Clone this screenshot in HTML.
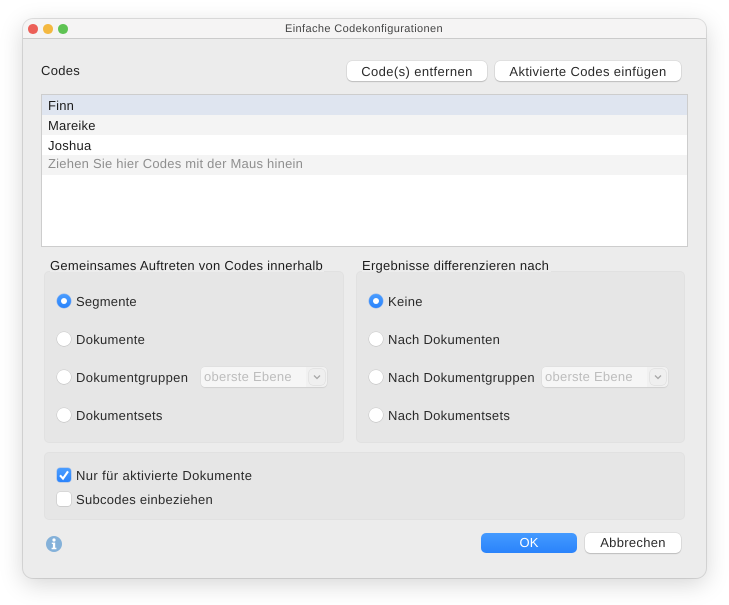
<!DOCTYPE html>
<html><head><meta charset="utf-8">
<style>
html,body{margin:0;padding:0;background:#fff;width:729px;height:605px;overflow:hidden}
body{position:relative;font-family:"Liberation Sans",sans-serif;font-size:13px;color:#2a2a2a;text-rendering:geometricPrecision;filter:blur(.3px)}
div,span{position:absolute;box-sizing:border-box}
.t{white-space:nowrap;line-height:16px;height:16px}
#win{left:23px;top:19px;width:683px;height:559px;background:#ececec;border-radius:10px;box-shadow:0 0 0 1px rgba(0,0,0,.11),0 6px 24px rgba(0,0,0,.17)}
#bar{left:0;top:0;width:683px;height:20px;background:#f5f4f4;border-bottom:1px solid #cbcbcb;border-radius:10px 10px 0 0}
.dot{width:9.5px;height:9.5px;border-radius:50%;top:5px}
.btn{background:#fff;border-radius:5px;height:20px;box-shadow:0 0 0 .5px rgba(0,0,0,.1),0 1px 1px rgba(0,0,0,.16);text-align:center;line-height:20px;white-space:nowrap;color:#2a2a2a}
.row{left:1px;width:645px;height:20px}
.group{background:#e6e6e6;border:1px solid #e1e1e1;border-radius:5px}
.lab{background:#ececec;height:10px}
.radio{width:14px;height:14px;border-radius:50%;background:#fff;box-shadow:0 0 0 .5px rgba(0,0,0,.12),0 .5px 1px rgba(0,0,0,.1)}
.radio.on{background:linear-gradient(#4a9dff,#2a83fb);box-shadow:0 0 0 .5px rgba(30,110,240,.4)}
.radio.on:after{content:"";position:absolute;left:4px;top:4px;width:6px;height:6px;border-radius:50%;background:#fff}
.sel{width:126px;height:20px;background:#f1f1f1;border-radius:4px;box-shadow:0 0 0 .5px rgba(0,0,0,.05),0 1px 1px rgba(0,0,0,.07)}
.sel .inner{left:0;top:0;width:105px;height:20px;background:#f6f6f6;border-radius:4px 0 0 4px}
.sel .t{left:3px;top:2px;color:#bdbdbd;letter-spacing:.25px}
.sel .arr{left:108px;top:2px;width:16px;height:16px;background:#efefef;border-radius:4px;box-shadow:0 0 0 .5px rgba(0,0,0,.1)}
.sel svg{position:absolute;left:3px;top:4px}
.cb{width:14px;height:14px;border-radius:3px;background:#fff;box-shadow:0 0 0 .5px rgba(0,0,0,.12),0 .5px 1px rgba(0,0,0,.1)}
</style></head>
<body>
<div id="win">
 <div id="bar">
  <div class="dot" style="left:5px;background:#ec5f57"></div>
  <div class="dot" style="left:20px;background:#f4b840"></div>
  <div class="dot" style="left:35px;background:#5fc353"></div>
  <div class="t" style="left:262px;top:2px;font-size:11px;color:#444;letter-spacing:.38px">Einfache Codekonfigurationen</div>
 </div>
</div>

<div class="t" style="left:41px;top:63px;color:#222;letter-spacing:.3px">Codes</div>
<div class="btn" style="left:347px;top:61px;width:140px;letter-spacing:.4px;line-height:21px">Code(s) entfernen</div>
<div class="btn" style="left:495px;top:61px;width:186px;letter-spacing:.36px;line-height:21px">Aktivierte Codes einfügen</div>

<div style="left:41px;top:94px;width:647px;height:153px;background:#fff;border:1px solid #cdcdcd">
 <div class="row" style="left:0;top:0;background:#dfe5f0"></div>
 <div class="row" style="left:0;top:20px;background:#f4f4f4"></div>
 <div class="row" style="left:0;top:60px;background:#f4f4f4"></div>
 <div class="t" style="left:6px;top:3px;color:#1c1c1c;letter-spacing:.2px">Finn</div>
 <div class="t" style="left:6px;top:23px;color:#1c1c1c;letter-spacing:.2px">Mareike</div>
 <div class="t" style="left:6px;top:43px;color:#1c1c1c;letter-spacing:.25px">Joshua</div>
 <div class="t" style="left:6px;top:61px;color:#8f8f8f;letter-spacing:.23px">Ziehen Sie hier Codes mit der Maus hinein</div>
</div>

<div class="group" style="left:44px;top:271px;width:300px;height:172px"></div>
<div class="lab" style="left:50px;top:262px;width:274px"></div>
<div class="t" style="left:50px;top:258px;color:#1c1c1c;letter-spacing:.26px">Gemeinsames Auftreten von Codes innerhalb</div>

<div class="radio on" style="left:57px;top:294px"></div>
<div class="t" style="left:76px;top:294px;letter-spacing:.2px">Segmente</div>
<div class="radio" style="left:57px;top:332px"></div>
<div class="t" style="left:76px;top:332px;letter-spacing:.3px">Dokumente</div>
<div class="radio" style="left:57px;top:370px"></div>
<div class="t" style="left:76px;top:370px;letter-spacing:.36px">Dokumentgruppen</div>
<div class="sel" style="left:201px;top:367px">
 <div class="inner"></div><div class="t">oberste Ebene</div>
 <div class="arr"><svg width="10" height="8" viewBox="0 0 10 8"><path d="M2 2.5 L5 5.5 L8 2.5" fill="none" stroke="#a8a8a8" stroke-width="1.3"/></svg></div>
</div>
<div class="radio" style="left:57px;top:408px"></div>
<div class="t" style="left:76px;top:408px;letter-spacing:.3px">Dokumentsets</div>

<div class="group" style="left:356px;top:271px;width:329px;height:172px"></div>
<div class="lab" style="left:362px;top:262px;width:189px"></div>
<div class="t" style="left:362px;top:258px;color:#1c1c1c;letter-spacing:.27px">Ergebnisse differenzieren nach</div>

<div class="radio on" style="left:369px;top:294px"></div>
<div class="t" style="left:388px;top:294px;letter-spacing:.3px">Keine</div>
<div class="radio" style="left:369px;top:332px"></div>
<div class="t" style="left:388px;top:332px;letter-spacing:.3px">Nach Dokumenten</div>
<div class="radio" style="left:369px;top:370px"></div>
<div class="t" style="left:388px;top:370px;letter-spacing:.3px">Nach Dokumentgruppen</div>
<div class="sel" style="left:542px;top:367px">
 <div class="inner"></div><div class="t">oberste Ebene</div>
 <div class="arr"><svg width="10" height="8" viewBox="0 0 10 8"><path d="M2 2.5 L5 5.5 L8 2.5" fill="none" stroke="#a8a8a8" stroke-width="1.3"/></svg></div>
</div>
<div class="radio" style="left:369px;top:408px"></div>
<div class="t" style="left:388px;top:408px;letter-spacing:.3px">Nach Dokumentsets</div>

<div class="group" style="left:44px;top:452px;width:641px;height:68px"></div>
<div class="cb" style="left:57px;top:468px;background:linear-gradient(#4a9dff,#2a83fb);box-shadow:0 0 0 .5px rgba(30,110,240,.4)">
 <svg width="14" height="14" viewBox="0 0 14 14" style="position:absolute;left:0;top:0"><path d="M3 7.3 L6 10.6 L11 3.4" fill="none" stroke="#fff" stroke-width="2.1"/></svg>
</div>
<div class="t" style="left:76px;top:468px;letter-spacing:.39px">Nur für aktivierte Dokumente</div>
<div class="cb" style="left:57px;top:492px"></div>
<div class="t" style="left:76px;top:492px;letter-spacing:.27px">Subcodes einbeziehen</div>

<svg width="16" height="16" viewBox="0 0 16 16" style="position:absolute;left:46px;top:536px">
 <circle cx="8" cy="8" r="8" fill="#84b1d9"/>
 <circle cx="8" cy="4" r="1.6" fill="#fff"/>
 <path d="M5.8 6.6H9.2V11.8H10.4V13.2H5.6V11.8H6.9V8H5.8Z" fill="#fff"/>
</svg>

<div class="btn" style="left:481px;top:533px;width:96px;background:linear-gradient(#449aff,#2a83fb);color:#fff;box-shadow:none;letter-spacing:.1px">OK</div>
<div class="btn" style="left:585px;top:533px;width:96px;letter-spacing:.3px">Abbrechen</div>
</body></html>
